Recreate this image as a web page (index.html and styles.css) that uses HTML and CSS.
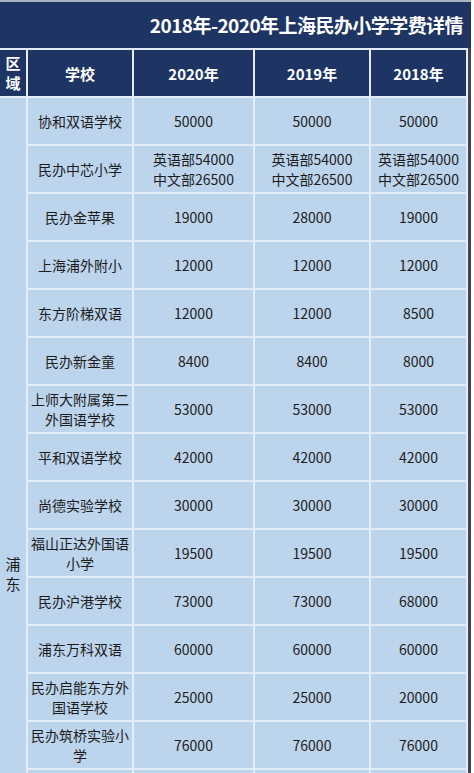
FILE: index.html
```html
<!DOCTYPE html>
<html lang="zh-CN">
<head>
<meta charset="utf-8">
<title>2018年-2020年上海民办小学学费详情</title>
<link rel="stylesheet" href="styles.css">
</head>
<body>
<div class="sheet">
  <div class="title">2018年-2020年上海民办小学学费详情</div>
  <div class="grid">
    <div class="hd region-hd">区<br>域</div>
    <div class="hd">学校</div>
    <div class="hd">2020年</div>
    <div class="hd">2019年</div>
    <div class="hd">2018年</div>

    <div class="region">浦<br>东</div>

    <div class="c">协和双语学校</div><div class="c">50000</div><div class="c">50000</div><div class="c">50000</div>
    <div class="c">民办中芯小学</div><div class="c">英语部54000<br>中文部26500</div><div class="c">英语部54000<br>中文部26500</div><div class="c">英语部54000<br>中文部26500</div>
    <div class="c">民办金苹果</div><div class="c">19000</div><div class="c">28000</div><div class="c">19000</div>
    <div class="c">上海浦外附小</div><div class="c">12000</div><div class="c">12000</div><div class="c">12000</div>
    <div class="c">东方阶梯双语</div><div class="c">12000</div><div class="c">12000</div><div class="c">8500</div>
    <div class="c">民办新金童</div><div class="c">8400</div><div class="c">8400</div><div class="c">8000</div>
    <div class="c">上师大附属第二外国语学校</div><div class="c">53000</div><div class="c">53000</div><div class="c">53000</div>
    <div class="c">平和双语学校</div><div class="c">42000</div><div class="c">42000</div><div class="c">42000</div>
    <div class="c">尚德实验学校</div><div class="c">30000</div><div class="c">30000</div><div class="c">30000</div>
    <div class="c">福山正达外国语小学</div><div class="c">19500</div><div class="c">19500</div><div class="c">19500</div>
    <div class="c">民办沪港学校</div><div class="c">73000</div><div class="c">73000</div><div class="c">68000</div>
    <div class="c">浦东万科双语</div><div class="c">60000</div><div class="c">60000</div><div class="c">60000</div>
    <div class="c">民办启能东方外国语学校</div><div class="c">25000</div><div class="c">25000</div><div class="c">20000</div>
    <div class="c">民办筑桥实验小学</div><div class="c">76000</div><div class="c">76000</div><div class="c">76000</div>
    <div class="c"></div><div class="c"></div><div class="c"></div><div class="c"></div>
  </div>
</div>
</body>
</html>
```

FILE: styles.css
```css
html, body {
  margin: 0;
  padding: 0;
  background: #ffffff;
}

body {
  font-family: "Noto Sans CJK SC", "Noto Sans", sans-serif;
  height: 773px;
  overflow: hidden;
}

.sheet {
  width: 471px;
  height: 773px;
  overflow: hidden;
  border-top: 2px solid #aab2c2;
  box-sizing: border-box;
}

.title {
  height: 46px;
  background: #1e3563;
  color: #ffffff;
  font-weight: 700;
  font-size: 19px;
  letter-spacing: -0.55px;
  line-height: 46px;
  text-align: right;
  padding-right: 8px;
  white-space: nowrap;
}

.grid {
  display: grid;
  grid-template-columns: 26px 104px 119px 114px 95px;
  grid-auto-rows: 46px;
  gap: 2px;
  padding: 2px 2px 0 0;
  background: #e4edf7;
  border-right: 3px solid #41464f;
}

.hd {
  background: #1e3563;
  color: #ffffff;
  font-weight: 700;
  font-size: 15px;
  display: flex;
  align-items: center;
  justify-content: center;
  text-align: center;
}

.region-hd {
  line-height: 20px;
}

.region {
  grid-column: 1;
  grid-row: 2 / span 15;
  background: #bcd4ec;
  color: #1c1c1c;
  font-size: 15px;
  line-height: 20px;
  text-align: center;
  padding-top: 456px;
}

.c {
  background: #bcd4ec;
  color: #1c1c1c;
  font-size: 14px;
  line-height: 20px;
  display: flex;
  align-items: center;
  justify-content: center;
  text-align: center;
  padding: 0 2px;
}
```
